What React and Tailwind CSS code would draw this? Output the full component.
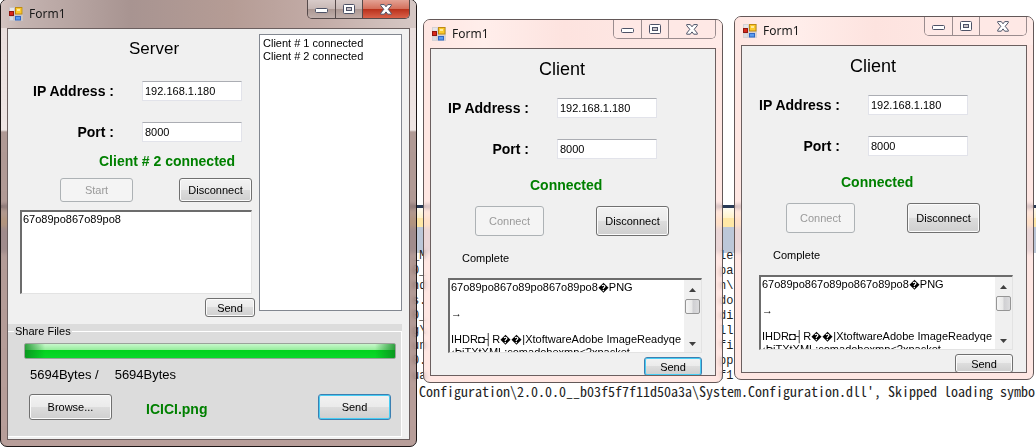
import React, { useId } from "react";

const LOG = [
  ["_M", "le"],
  ["0_", "pa"],
  ["nd", "n\\"],
  ["s.", "do"],
  ["0_", "di"],
  ["g\\", "ll"],
  ["un", "fi"],
  ["0.", "pp"],
  ["ua", "f1"],
];

const RECEIVED =
  "67o89po867o89po867o89po8\uFFFDPNG\n\n→\n\nIHDR◘┤R\uFFFD\uFFFD|XtoftwareAdobe ImageReadyqe\n‹ÞiTXtXML:comadobexmp<?xpacket";

function FormIcon() {
  return (
    <svg width="14" height="14" viewBox="0 0 14 14" aria-hidden="true">
      <rect x="0" y="0" width="14" height="14" fill="#c9c9cf" opacity=".75" />
      <rect x="1" y="1" width="4" height="3" fill="#e6e6ea" />
      <rect x="1" y="10" width="3" height="3" fill="#dcdce0" />
      <rect x="0.5" y="4.5" width="4" height="4" fill="#d8281c" stroke="#8f1710" />
      <rect x="6.5" y="0.5" width="6.5" height="6.5" fill="#fbc92c" stroke="#c08a10" />
      <rect x="8" y="2" width="3" height="2" fill="#ffeb9a" />
      <rect x="6.5" y="9.5" width="5" height="3.5" fill="#5b9bf0" stroke="#2f66c4" />
    </svg>
  );
}

function MinIcon() {
  return (
    <svg width="13" height="6" viewBox="0 0 13 6" aria-hidden="true">
      <rect x="0.5" y="0.5" width="12" height="4" rx="1" fill="#fff" stroke="#4d5266" />
    </svg>
  );
}

function MaxIcon() {
  return (
    <svg width="12" height="10" viewBox="0 0 12 10" aria-hidden="true">
      <rect x="0.5" y="0.5" width="11" height="9" rx="1" fill="#fff" stroke="#4d5266" />
      <rect x="3.5" y="3.5" width="5" height="3" fill="#c9c3c8" stroke="#4d5266" />
    </svg>
  );
}

function CloseIcon() {
  return (
    <svg width="12" height="11" viewBox="0 0 12 11" aria-hidden="true">
      <path
        d="M.7.6h3.6L6 2.8 7.7.6h3.6v1L8.2 5.3l3.1 3.9v1H7.700L6 7.9l-1.700 2.300H.7v-1l3.100-3.900L.7 1.600z"
        fill="#fff"
        stroke="#4d5266"
      />
    </svg>
  );
}

function Window({ dark, place, children }) {
  const frame = dark
    ? "border-[#1c1616] bg-[linear-gradient(180deg,#e0d0ceb3_28px,#eadfddcc_130px,#90716bb8_132px,#a07e78c0_100%)]"
    : "border-[#635858] bg-[#ffdcd6b0]";
  const header = dark
    ? "bg-[linear-gradient(90deg,#d4c4c1,#c4b3b0_20px,#a89491_130px,#b59c95_230px,#c3aca7_320px,#d6c8c5)]"
    : "bg-[linear-gradient(90deg,#ffe6e2,#ffeeeb_60px,#fde3df_140px,#ffebe8)]";
  const caption = dark ? "border-[#564a4a]" : "border-[#9a8c8e]";
  const glass = dark
    ? "bg-[linear-gradient(180deg,#d8cbc9_0%,#c8b8b5_48%,#ab9792_50%,#c0afab_100%)]"
    : "bg-[#fee8e5]";
  const close = dark
    ? "bg-[linear-gradient(180deg,#e3a294_0%,#d4705c_48%,#b8301a_50%,#d9614a_100%)]"
    : "bg-[#fee8e5]";
  return (
    <section
      className={`absolute ${place} overflow-hidden rounded-[7px] border backdrop-blur-[2px] ${frame}`}
    >
      <header className={`flex h-7 items-start px-1.5 ${header}`}>
        <div className="flex h-7 flex-1 items-center gap-1.5 pl-0.5">
          <FormIcon />
          <h1 className="font-['Noto_Sans','Open_Sans',sans-serif] text-[12px] leading-4 text-[#1a1a1a]">
            Form1
          </h1>
        </div>
        <div className={`flex h-[19px] overflow-hidden rounded-b-[5px] border border-t-0 ${caption}`}>
          <button
            aria-label="Minimize"
            className={`flex w-7 items-center justify-center border-r pt-1 ${caption} ${glass}`}
          >
            <MinIcon />
          </button>
          <button
            aria-label="Maximize"
            className={`flex w-[27px] items-center justify-center border-r ${caption} ${glass}`}
          >
            <MaxIcon />
          </button>
          <button aria-label="Close" className={`flex w-[46px] items-center justify-center ${close}`}>
            <CloseIcon />
          </button>
        </div>
      </header>
      <div className="px-1.5 pb-1.5">
        <div className="border border-[#6b5f5f] bg-[#f0f0f0]">{children}</div>
      </div>
    </section>
  );
}

function Button({ size, focused, disabled, children }) {
  const look = disabled
    ? "border-[#adb2b5] bg-[#f4f4f4] text-[#9a9a9a]"
    : focused
      ? "border-[#3c7fb1] bg-[linear-gradient(180deg,#f2f2f2_0%,#ebebeb_48%,#dddddd_50%,#cfcfcf_100%)] shadow-[inset_0_0_0_1px_#48cdf4] text-black"
      : "border-[#707070] bg-[linear-gradient(180deg,#f2f2f2_0%,#ebebeb_48%,#dddddd_50%,#cfcfcf_100%)] shadow-[inset_0_0_0_1px_#fbfbfb] text-black";
  return (
    <button
      type="button"
      disabled={disabled}
      className={`flex items-center justify-center rounded-[3px] border text-[11px] leading-4 ${size} ${look}`}
    >
      {children}
    </button>
  );
}

function Field({ label, value, labelWidth }) {
  const id = useId();
  return (
    <div className="flex items-center gap-7">
      <label htmlFor={id} className={`text-right text-[14px] leading-5 font-bold ${labelWidth}`}>
        {label}
      </label>
      <input
        id={id}
        defaultValue={value}
        className="h-5 w-[100px] border border-[#e2e3ea] border-t-[#abadb3] bg-white px-0.5 text-[11px] outline-none"
      />
    </div>
  );
}

function Server() {
  return (
    <Window dark place="left-0 -top-px w-[417px]">
      <div className="flex">
        <div className="flex w-[251px] flex-col pt-2 pb-[7px]">
          <h2 className="pl-[121px] text-[17px] leading-6">Server</h2>
          <div className="mt-5 flex flex-col gap-[21px]">
            <Field label="IP Address :" value="192.168.1.180" labelWidth="w-[106px]" />
            <Field label="Port :" value="8000" labelWidth="w-[106px]" />
          </div>
          <p className="mt-2 pl-[91px] text-[14px] leading-[22px] font-bold text-[#008000]">
            Client # 2 connected
          </p>
          <div className="mt-1.5 flex justify-between pr-[7px] pl-[52px]">
            <Button size="h-6 w-[73px]" disabled>
              Start
            </Button>
            <Button size="h-6 w-[73px]">Disconnect</Button>
          </div>
          <textarea
            aria-label="Message"
            defaultValue="67o89po867o89po8"
            className="mt-2 mr-[7px] ml-3 h-[84px] resize-none border border-t-2 border-l-2 border-[#e3e3e3] border-t-[#6c6c6c] border-l-[#6c6c6c] bg-white px-px pt-px text-[11px] leading-[13px] outline-none"
          />
          <div className="mt-1 flex justify-end pr-1">
            <Button size="h-[19px] w-[50px]">Send</Button>
          </div>
        </div>
        <ul className="mt-[5px] mr-[7px] mb-[13px] flex-1 border border-[#828790] bg-white px-[3px] pt-0.5 text-[11px] leading-[13px]">
          <li>Client # 1 connected</li>
          <li>Client # 2 connected</li>
        </ul>
      </div>
      <div className="mr-[7px] mb-0.5 bg-[#dcdcdc]">
        <fieldset className="border border-l-0 border-white pb-4">
          <legend className="ml-1.5 px-px text-[11px] leading-[14px]">Share Files</legend>
          <div
            role="progressbar"
            aria-label="Transfer"
            aria-valuenow={100}
            className="mt-[5px] mr-[5px] ml-4 h-4 rounded-[2px] border border-[#9aa39a] bg-[linear-gradient(90deg,#0a8a1ecc_0,#0a8a1e00_20px),linear-gradient(270deg,#0a8a1ecc_0,#0a8a1e00_20px),linear-gradient(180deg,#c8f7cc_0%,#96ee9c_42%,#03d31f_46%,#0ad82a_100%)]"
          />
          <p className="mt-2 flex gap-4 pl-[22px] text-[13px] leading-4">
            <span>5694Bytes /</span>
            <span>5694Bytes</span>
          </p>
          <div className="mt-[11px] flex items-center pr-2.5 pl-[21px]">
            <Button size="h-[26px] w-[83px]">Browse...</Button>
            <p className="flex-1 pt-1 pl-[34px] text-[14px] leading-5 font-bold text-[#008000]">
              ICICI.png
            </p>
            <Button size="h-[26px] w-[73px]" focused>
              Send
            </Button>
          </div>
        </fieldset>
      </div>
    </Window>
  );
}

function ScrollBar() {
  return (
    <div className="flex w-[17px] flex-col items-center bg-[#f0f0f0] py-1.5">
      <svg width="7" height="4" viewBox="0 0 7 4" className="mt-0.5" aria-hidden="true">
        <path d="M0 4 3.5 0 7 4z" fill="#404040" />
      </svg>
      <div className="mt-[7px] mb-auto h-[15px] w-[15px] rounded-[2px] border border-[#959595] bg-[linear-gradient(90deg,#f5f5f5_0%,#e8e8e8_48%,#cfcfd2_52%,#dcdcde_100%)]" />
      <svg width="7" height="4" viewBox="0 0 7 4" aria-hidden="true">
        <path d="M0 0h7L3.5 4z" fill="#404040" />
      </svg>
    </div>
  );
}

function Client({ place, focused }) {
  return (
    <Window place={`${place} w-[300px]`}>
      <div className="flex flex-col pt-2">
        <h2 className="pl-[108px] text-[18px] leading-6">Client</h2>
        <div className="mt-[17px] flex flex-col gap-[21px]">
          <Field label="IP Address :" value="192.168.1.180" labelWidth="w-[98px]" />
          <Field label="Port :" value="8000" labelWidth="w-[98px]" />
        </div>
        <p className="mt-[15px] pl-[99px] text-[14px] leading-[22px] font-bold text-[#008000]">
          Connected
        </p>
        <div className="mt-2.5 flex justify-between pr-[46px] pl-11">
          <Button size="h-[30px] w-[69px]" disabled>
            Connect
          </Button>
          <Button size="h-[30px] w-[73px]">Disconnect</Button>
        </div>
        <p className="mt-3.5 pl-[31px] text-[11px] leading-4">Complete</p>
        <div className="mt-3 mr-[13px] ml-[17px] flex h-[75px] border border-t-2 border-l-2 border-[#e3e3e3] border-t-[#6c6c6c] border-l-[#6c6c6c] bg-white">
          <textarea
            aria-label="Received"
            defaultValue={RECEIVED}
            className="min-w-0 flex-1 resize-none overflow-hidden pt-px pl-px text-[11px] leading-[13px] whitespace-pre outline-none"
          />
          <ScrollBar />
        </div>
        <div className="mt-1 flex h-[18px] items-start justify-end overflow-hidden pr-[13px]">
          <Button size="h-[19px] w-[58px] shrink-0" focused={focused}>
            Send
          </Button>
        </div>
      </div>
    </Window>
  );
}

export default function App() {
  return (
    <main className="relative min-h-screen w-full overflow-hidden bg-white font-['Liberation_Sans',Arial,sans-serif] text-black">
      <div className="pt-[205px]">
        <div className="h-[3px] bg-[#293955]" />
        <div className="h-[19px] bg-[linear-gradient(180deg,#fffcf2_0%,#fff3cd_50%,#ffe8a6_52%,#ffe8a6_100%)]" />
        <div className="h-[26px] bg-[#bcc7d8]" />
        <div className="-mt-1 pl-[412px] whitespace-pre text-[#1e1e1e]">
          {LOG.map(([left, right], i) => (
            <div
              key={i}
              className="grid grid-cols-[307px_1fr] font-['Liberation_Mono',monospace] text-[12px] leading-[15px]"
            >
              <span>{left}</span>
              <span>{right}</span>
            </div>
          ))}
          <p className="pl-[7px] font-['Noto_Sans_Mono_CJK_SC','Liberation_Mono',monospace] text-[14px] leading-[15px]">
            {
              "Configuration\\2.0.0.0__b03f5f7f11d50a3a\\System.Configuration.dll', Skipped loading symbo"
            }
          </p>
        </div>
      </div>
      <Server />
      <Client place="left-[423px] top-[19px]" focused />
      <Client place="left-[734px] top-4" />
    </main>
  );
}
